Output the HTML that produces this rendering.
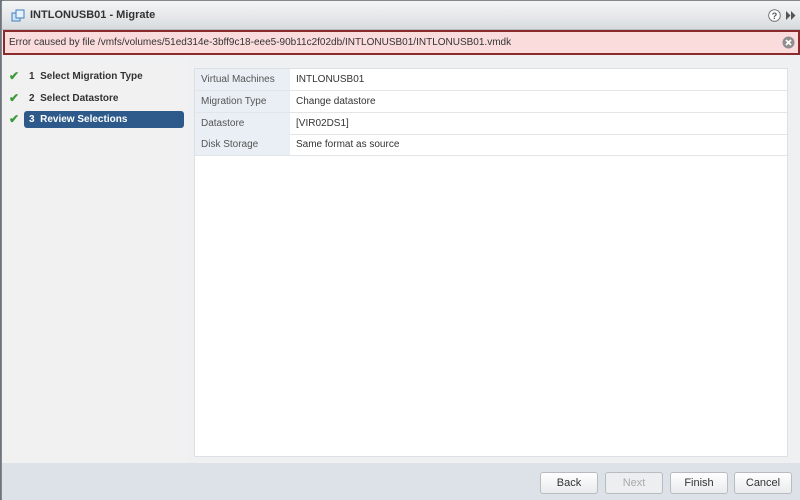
<!DOCTYPE html>
<html><head><style>
*{margin:0;padding:0;box-sizing:border-box}
body{width:800px;height:499px;overflow:hidden;background:#6b7480;font-family:"Liberation Sans",Arial,sans-serif;font-size:10px;color:#333;position:relative}
.win{position:absolute;left:1px;top:0;width:799px;height:499px;background:#eef0f2;border-left:1px solid #888;border-top:1px solid #888;border-radius:4px 0 0 0}
.title{position:absolute;left:0;top:0;right:0;height:29px;background:linear-gradient(#f4f5f6,#d9dcdf);border-bottom:1px solid #b8bcc0}
.title span{position:absolute;left:28px;top:8px;font-weight:bold;font-size:11px;color:#333}
.err{position:absolute;left:1px;top:29px;width:797px;height:25px;background:#fbdcdc;border:2px solid #8a2a2a;}
.err span{position:absolute;left:4px;top:5px;color:#333;font-size:10px}
.left{position:absolute;left:1px;top:58px;width:184px;height:404px;background:#f1f1f1}
.step{position:absolute;left:6px;font-weight:bold;font-size:10px;color:#333;height:17px;line-height:17px}
.chk{color:#3a9a3a;font-size:12px;position:absolute;left:0}
.main{position:absolute;left:192px;top:67px;width:594px;height:389px;background:#fff;border:1px solid #dde0e3}
.row{position:absolute;left:0;width:592px;height:22px;border-bottom:1px solid #e3e6e9;line-height:21px}
.row .k{position:absolute;left:0;width:95px;height:21px;background:#e9eff5;padding-left:6px;color:#555}
.row .v{position:absolute;left:101px;color:#333}
.foot{position:absolute;left:0;top:462px;width:799px;height:37px;background:#dde2e8}
.btn{position:absolute;top:471px;height:22px;width:58px;border:1px solid #b8bcc0;border-radius:3px;background:linear-gradient(#fff,#e9ebed);text-align:center;line-height:20px;font-size:11px;color:#333}
</style></head><body>
<div class="win">
<div class="title">
<svg style="position:absolute;left:9px;top:8px" width="14" height="14" viewBox="0 0 14 14"><rect x="1" y="4" width="8" height="8" fill="#cfe3f5" stroke="#3d7fc0"/><rect x="5" y="1" width="8" height="8" fill="#e6f1fb" stroke="#3d7fc0"/></svg>
<span>INTLONUSB01 - Migrate</span>
<svg style="position:absolute;left:766px;top:8px" width="13" height="13"><circle cx="6.5" cy="6.5" r="5.8" fill="#fff" stroke="#777"/><text x="6.5" y="10" font-size="9" font-weight="bold" text-anchor="middle" fill="#555" font-family="Liberation Sans">?</text></svg>
<svg style="position:absolute;left:784px;top:10px" width="10" height="9"><path d="M0 0L4.5 4.5L0 9Z M5 0L9.5 4.5L5 9Z" fill="#555"/></svg>
</div>
<div class="err"><span>Error caused by file /vmfs/volumes/51ed314e-3bff9c18-eee5-90b11c2f02db/INTLONUSB01/INTLONUSB01.vmdk</span>
<svg style="position:absolute;left:777px;top:4px" width="13" height="13"><circle cx="6.5" cy="6.5" r="6" fill="#8f8f8f"/><path d="M4 4L9 9M9 4L4 9" stroke="#fff" stroke-width="1.8"/></svg></div>
<div class="left">
<div class="step" style="top:9px;left:6px;width:170px"><span class="chk">✔</span><span style="position:absolute;left:20px">1&nbsp; Select Migration Type</span></div>
<div class="step" style="top:31px;left:6px;width:170px"><span class="chk">✔</span><span style="position:absolute;left:20px">2&nbsp; Select Datastore</span></div>
<div class="step" style="top:52px;left:6px;width:176px"><span class="chk">✔</span><span style="position:absolute;left:15px;width:160px;height:17px;background:#2d5a8a;color:#fff;border-radius:3px;padding-left:5px">3&nbsp; Review Selections</span></div>
</div>
<div class="main">
<div class="row" style="top:0"><span class="k">Virtual Machines</span><span class="v">INTLONUSB01</span></div>
<div class="row" style="top:22px"><span class="k">Migration Type</span><span class="v">Change datastore</span></div>
<div class="row" style="top:44px"><span class="k">Datastore</span><span class="v">[VIR02DS1]</span></div>
<div class="row" style="top:65px"><span class="k">Disk Storage</span><span class="v">Same format as source</span></div>
</div>
<div class="foot"></div>
<div class="btn" style="left:538px">Back</div>
<div class="btn" style="left:603px;color:#aaa;background:#eceef0">Next</div>
<div class="btn" style="left:668px">Finish</div>
<div class="btn" style="left:732px">Cancel</div>
</div>
</body></html>
